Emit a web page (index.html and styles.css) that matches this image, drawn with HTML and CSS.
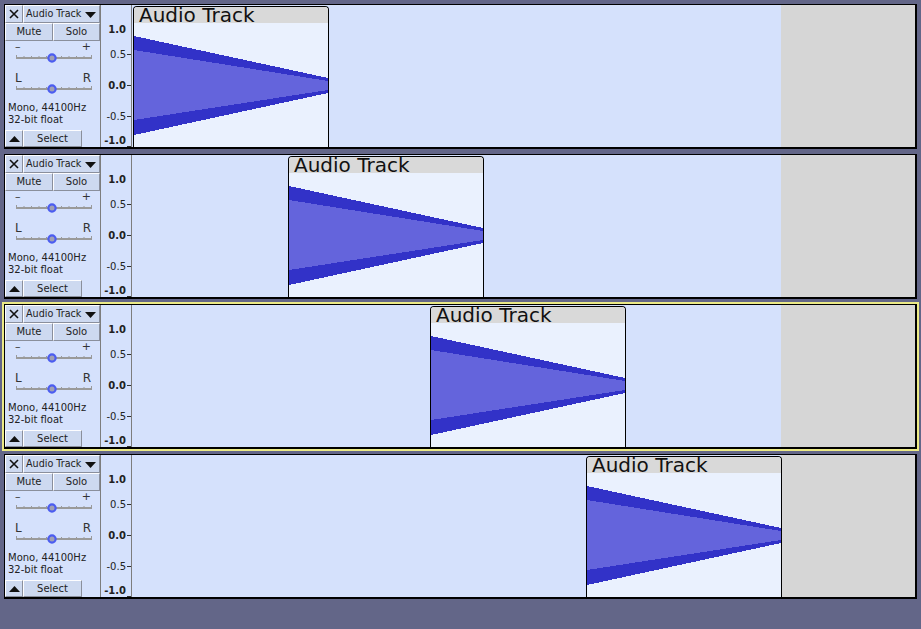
FILE: index.html
```html
<!DOCTYPE html>
<html>
<head>
<meta charset="utf-8">
<link rel="stylesheet" href="styles.css">
</head>
<body>
<div class="tracks">

  <!-- Track 1 -->
  <div class="track">
    <div class="panel">
      <div class="row top-row">
        <div class="btn close-btn"><svg width="10" height="10" viewBox="0 0 10 10"><path d="M1 1 L9 9 M9 1 L1 9" stroke="#111" stroke-width="1.6"/></svg></div>
        <div class="btn title-btn"><span>Audio Track</span><svg width="11" height="6" viewBox="0 0 11 6"><path d="M0 0 H11 L5.5 6 Z" fill="#111"/></svg></div>
      </div>
      <div class="row ms-row">
        <div class="btn mute-btn">Mute</div>
        <div class="btn solo-btn">Solo</div>
      </div>
      <div class="slider gain">
        <div class="slider-labels"><span>–</span><span>+</span></div>
        <svg class="slider-svg" width="78" height="10" viewBox="0 0 78 10"><path d="M1 5 H77" stroke="#9a9a9a" stroke-width="2"/><path d="M1.5 5 V2 M9 5 V3 M16.5 5 V3 M24 5 V3 M31.5 5 V3 M46.5 5 V3 M54 5 V3 M61.5 5 V3 M69 5 V3 M76.5 5 V2" stroke="#9a9a9a" stroke-width="1"/><circle cx="37" cy="5" r="3.6" fill="#a0a0b4" stroke="#4b5cf0" stroke-width="2.2"/></svg>
      </div>
      <div class="slider pan">
        <div class="slider-labels lr"><span>L</span><span>R</span></div>
        <svg class="slider-svg" width="78" height="10" viewBox="0 0 78 10"><path d="M1 5 H77" stroke="#9a9a9a" stroke-width="2"/><path d="M1.5 5 V2 M9 5 V3 M16.5 5 V3 M24 5 V3 M31.5 5 V3 M46.5 5 V3 M54 5 V3 M61.5 5 V3 M69 5 V3 M76.5 5 V2" stroke="#9a9a9a" stroke-width="1"/><circle cx="37" cy="5" r="3.6" fill="#a0a0b4" stroke="#4b5cf0" stroke-width="2.2"/></svg>
      </div>
      <div class="info">Mono, 44100Hz<br>32-bit float</div>
      <div class="row bottom-row">
        <div class="btn collapse-btn"><svg width="11" height="6" viewBox="0 0 11 6"><path d="M0 6 H11 L5.5 0 Z" fill="#111"/></svg></div>
        <div class="btn select-btn">Select</div>
      </div>
    </div>
    <div class="ruler">
      <span class="lbl bold" style="top:19px">1.0</span>
      <span class="lbl" style="top:44px">0.5</span><i class="tick" style="top:49px"></i>
      <span class="lbl bold" style="top:75px">0.0</span><i class="tick" style="top:80px"></i>
      <span class="lbl" style="top:106px">-0.5</span><i class="tick" style="top:111px"></i>
      <span class="lbl bold" style="top:130px">-1.0</span><i class="tick" style="top:141px"></i>
    </div>
    <div class="wave-area">
      <div class="clip" style="margin-left:1px">
        <div class="clip-head">Audio Track</div>
        <div class="clip-body">
          <svg width="194" height="124" viewBox="0 0 194 124" shape-rendering="crispEdges"><polygon points="0,13 194,55 194,70 0,112" fill="#3232c8"/><polygon points="0,27 194,58 194,67 0,97" fill="#6464dc"/></svg>
        </div>
      </div>
    </div>
  </div>

  <!-- Track 2 -->
  <div class="track">
    <div class="panel">
      <div class="row top-row">
        <div class="btn close-btn"><svg width="10" height="10" viewBox="0 0 10 10"><path d="M1 1 L9 9 M9 1 L1 9" stroke="#111" stroke-width="1.6"/></svg></div>
        <div class="btn title-btn"><span>Audio Track</span><svg width="11" height="6" viewBox="0 0 11 6"><path d="M0 0 H11 L5.5 6 Z" fill="#111"/></svg></div>
      </div>
      <div class="row ms-row">
        <div class="btn mute-btn">Mute</div>
        <div class="btn solo-btn">Solo</div>
      </div>
      <div class="slider gain">
        <div class="slider-labels"><span>–</span><span>+</span></div>
        <svg class="slider-svg" width="78" height="10" viewBox="0 0 78 10"><path d="M1 5 H77" stroke="#9a9a9a" stroke-width="2"/><path d="M1.5 5 V2 M9 5 V3 M16.5 5 V3 M24 5 V3 M31.5 5 V3 M46.5 5 V3 M54 5 V3 M61.5 5 V3 M69 5 V3 M76.5 5 V2" stroke="#9a9a9a" stroke-width="1"/><circle cx="37" cy="5" r="3.6" fill="#a0a0b4" stroke="#4b5cf0" stroke-width="2.2"/></svg>
      </div>
      <div class="slider pan">
        <div class="slider-labels lr"><span>L</span><span>R</span></div>
        <svg class="slider-svg" width="78" height="10" viewBox="0 0 78 10"><path d="M1 5 H77" stroke="#9a9a9a" stroke-width="2"/><path d="M1.5 5 V2 M9 5 V3 M16.5 5 V3 M24 5 V3 M31.5 5 V3 M46.5 5 V3 M54 5 V3 M61.5 5 V3 M69 5 V3 M76.5 5 V2" stroke="#9a9a9a" stroke-width="1"/><circle cx="37" cy="5" r="3.6" fill="#a0a0b4" stroke="#4b5cf0" stroke-width="2.2"/></svg>
      </div>
      <div class="info">Mono, 44100Hz<br>32-bit float</div>
      <div class="row bottom-row">
        <div class="btn collapse-btn"><svg width="11" height="6" viewBox="0 0 11 6"><path d="M0 6 H11 L5.5 0 Z" fill="#111"/></svg></div>
        <div class="btn select-btn">Select</div>
      </div>
    </div>
    <div class="ruler">
      <span class="lbl bold" style="top:19px">1.0</span>
      <span class="lbl" style="top:44px">0.5</span><i class="tick" style="top:49px"></i>
      <span class="lbl bold" style="top:75px">0.0</span><i class="tick" style="top:80px"></i>
      <span class="lbl" style="top:106px">-0.5</span><i class="tick" style="top:111px"></i>
      <span class="lbl bold" style="top:130px">-1.0</span><i class="tick" style="top:141px"></i>
    </div>
    <div class="wave-area">
      <div class="clip" style="margin-left:156px">
        <div class="clip-head">Audio Track</div>
        <div class="clip-body">
          <svg width="194" height="124" viewBox="0 0 194 124" shape-rendering="crispEdges"><polygon points="0,13 194,55 194,70 0,112" fill="#3232c8"/><polygon points="0,27 194,58 194,67 0,97" fill="#6464dc"/></svg>
        </div>
      </div>
    </div>
  </div>

  <!-- Track 3 (focused) -->
  <div class="track focused">
    <div class="panel">
      <div class="row top-row">
        <div class="btn close-btn"><svg width="10" height="10" viewBox="0 0 10 10"><path d="M1 1 L9 9 M9 1 L1 9" stroke="#111" stroke-width="1.6"/></svg></div>
        <div class="btn title-btn"><span>Audio Track</span><svg width="11" height="6" viewBox="0 0 11 6"><path d="M0 0 H11 L5.5 6 Z" fill="#111"/></svg></div>
      </div>
      <div class="row ms-row">
        <div class="btn mute-btn">Mute</div>
        <div class="btn solo-btn">Solo</div>
      </div>
      <div class="slider gain">
        <div class="slider-labels"><span>–</span><span>+</span></div>
        <svg class="slider-svg" width="78" height="10" viewBox="0 0 78 10"><path d="M1 5 H77" stroke="#9a9a9a" stroke-width="2"/><path d="M1.5 5 V2 M9 5 V3 M16.5 5 V3 M24 5 V3 M31.5 5 V3 M46.5 5 V3 M54 5 V3 M61.5 5 V3 M69 5 V3 M76.5 5 V2" stroke="#9a9a9a" stroke-width="1"/><circle cx="37" cy="5" r="3.6" fill="#a0a0b4" stroke="#4b5cf0" stroke-width="2.2"/></svg>
      </div>
      <div class="slider pan">
        <div class="slider-labels lr"><span>L</span><span>R</span></div>
        <svg class="slider-svg" width="78" height="10" viewBox="0 0 78 10"><path d="M1 5 H77" stroke="#9a9a9a" stroke-width="2"/><path d="M1.5 5 V2 M9 5 V3 M16.5 5 V3 M24 5 V3 M31.5 5 V3 M46.5 5 V3 M54 5 V3 M61.5 5 V3 M69 5 V3 M76.5 5 V2" stroke="#9a9a9a" stroke-width="1"/><circle cx="37" cy="5" r="3.6" fill="#a0a0b4" stroke="#4b5cf0" stroke-width="2.2"/></svg>
      </div>
      <div class="info">Mono, 44100Hz<br>32-bit float</div>
      <div class="row bottom-row">
        <div class="btn collapse-btn"><svg width="11" height="6" viewBox="0 0 11 6"><path d="M0 6 H11 L5.5 0 Z" fill="#111"/></svg></div>
        <div class="btn select-btn">Select</div>
      </div>
    </div>
    <div class="ruler">
      <span class="lbl bold" style="top:19px">1.0</span>
      <span class="lbl" style="top:44px">0.5</span><i class="tick" style="top:49px"></i>
      <span class="lbl bold" style="top:75px">0.0</span><i class="tick" style="top:80px"></i>
      <span class="lbl" style="top:106px">-0.5</span><i class="tick" style="top:111px"></i>
      <span class="lbl bold" style="top:130px">-1.0</span><i class="tick" style="top:141px"></i>
    </div>
    <div class="wave-area">
      <div class="clip" style="margin-left:298px">
        <div class="clip-head">Audio Track</div>
        <div class="clip-body">
          <svg width="194" height="124" viewBox="0 0 194 124" shape-rendering="crispEdges"><polygon points="0,13 194,55 194,70 0,112" fill="#3232c8"/><polygon points="0,27 194,58 194,67 0,97" fill="#6464dc"/></svg>
        </div>
      </div>
    </div>
  </div>

  <!-- Track 4 -->
  <div class="track">
    <div class="panel">
      <div class="row top-row">
        <div class="btn close-btn"><svg width="10" height="10" viewBox="0 0 10 10"><path d="M1 1 L9 9 M9 1 L1 9" stroke="#111" stroke-width="1.6"/></svg></div>
        <div class="btn title-btn"><span>Audio Track</span><svg width="11" height="6" viewBox="0 0 11 6"><path d="M0 0 H11 L5.5 6 Z" fill="#111"/></svg></div>
      </div>
      <div class="row ms-row">
        <div class="btn mute-btn">Mute</div>
        <div class="btn solo-btn">Solo</div>
      </div>
      <div class="slider gain">
        <div class="slider-labels"><span>–</span><span>+</span></div>
        <svg class="slider-svg" width="78" height="10" viewBox="0 0 78 10"><path d="M1 5 H77" stroke="#9a9a9a" stroke-width="2"/><path d="M1.5 5 V2 M9 5 V3 M16.5 5 V3 M24 5 V3 M31.5 5 V3 M46.5 5 V3 M54 5 V3 M61.5 5 V3 M69 5 V3 M76.5 5 V2" stroke="#9a9a9a" stroke-width="1"/><circle cx="37" cy="5" r="3.6" fill="#a0a0b4" stroke="#4b5cf0" stroke-width="2.2"/></svg>
      </div>
      <div class="slider pan">
        <div class="slider-labels lr"><span>L</span><span>R</span></div>
        <svg class="slider-svg" width="78" height="10" viewBox="0 0 78 10"><path d="M1 5 H77" stroke="#9a9a9a" stroke-width="2"/><path d="M1.5 5 V2 M9 5 V3 M16.5 5 V3 M24 5 V3 M31.5 5 V3 M46.5 5 V3 M54 5 V3 M61.5 5 V3 M69 5 V3 M76.5 5 V2" stroke="#9a9a9a" stroke-width="1"/><circle cx="37" cy="5" r="3.6" fill="#a0a0b4" stroke="#4b5cf0" stroke-width="2.2"/></svg>
      </div>
      <div class="info">Mono, 44100Hz<br>32-bit float</div>
      <div class="row bottom-row">
        <div class="btn collapse-btn"><svg width="11" height="6" viewBox="0 0 11 6"><path d="M0 6 H11 L5.5 0 Z" fill="#111"/></svg></div>
        <div class="btn select-btn">Select</div>
      </div>
    </div>
    <div class="ruler">
      <span class="lbl bold" style="top:19px">1.0</span>
      <span class="lbl" style="top:44px">0.5</span><i class="tick" style="top:49px"></i>
      <span class="lbl bold" style="top:75px">0.0</span><i class="tick" style="top:80px"></i>
      <span class="lbl" style="top:106px">-0.5</span><i class="tick" style="top:111px"></i>
      <span class="lbl bold" style="top:130px">-1.0</span><i class="tick" style="top:141px"></i>
    </div>
    <div class="wave-area">
      <div class="clip" style="margin-left:454px">
        <div class="clip-head">Audio Track</div>
        <div class="clip-body">
          <svg width="194" height="124" viewBox="0 0 194 124" shape-rendering="crispEdges"><polygon points="0,13 194,55 194,70 0,112" fill="#3232c8"/><polygon points="0,27 194,58 194,67 0,97" fill="#6464dc"/></svg>
        </div>
      </div>
    </div>
  </div>

</div>
</body>
</html>
```

FILE: styles.css
```css
html, body {
  margin: 0;
  padding: 0;
  background: #636688;
  font-family: "DejaVu Sans", "Liberation Sans", sans-serif;
  color: #222;
}

.tracks {
  padding: 4px 0 0 4px;
  display: flex;
  flex-direction: column;
  gap: 5px;
}

.track {
  box-sizing: border-box;
  width: 913px;
  height: 145px;
  border-top: 1px solid #000;
  border-left: 1px solid #000;
  border-right: 2px solid #000;
  border-bottom: 2px solid #000;
  display: flex;
  background: #d5e1fc;
}

.track.focused {
  outline: 2px solid #ecea86;
  outline-offset: 0;
}

/* ---------- control panel ---------- */
.panel {
  width: 95px;
  border-right: 1px solid #7d7d7d;
  display: flex;
  flex-direction: column;
  background: #d5e1fc;
  font-size: 10px;
}

.row {
  display: flex;
}

.btn {
  box-sizing: border-box;
  background: #cdd9f0;
  border-top: 1px solid #fdfdff;
  border-left: 1px solid #fdfdff;
  border-right: 1px solid #8a8f9c;
  border-bottom: 1px solid #8a8f9c;
  display: flex;
  align-items: center;
  justify-content: center;
  height: 18px;
  color: #222;
  font-size: 10px;
  line-height: 1;
}

.close-btn { width: 18px; }
.title-btn {
  width: 77px;
  justify-content: space-between;
  padding: 0 3px 0 2px;
  font-size: 9.6px;
}
.title-btn svg { margin-top: 1px; flex: none; }

.mute-btn { width: 48px; }
.solo-btn { width: 47px; }

.slider {
  display: flex;
  flex-direction: column;
}

.slider-labels {
  display: flex;
  justify-content: space-between;
  padding: 0 9px 0 10px;
  height: 12px;
  font-size: 11px;
  line-height: 12px;
  color: #333;
}
.gain { height: 22px; }
.pan { margin-top: 9px; height: 22px; }
.slider-labels.lr {
  font-size: 12px;
  line-height: 13px;
}
.slider-svg {
  display: block;
  margin-left: 10px;
  flex: none;
}

.info {
  margin-top: 8px;
  padding-left: 3px;
  font-size: 10px;
  line-height: 12px;
  color: #222;
  height: 24px;
}

.bottom-row {
  margin-top: auto;
}
.collapse-btn { width: 18px; height: 17px; }
.select-btn { width: 59px; height: 17px; }

/* ---------- ruler ---------- */
.ruler {
  position: relative;
  width: 30px;
  border-right: 1px solid #7d7d7d;
  background: #d5e1fc;
  font-size: 10px;
  color: #222;
}
.lbl {
  position: absolute;
  right: 5px;
  line-height: 12px;
}
.lbl.bold { font-weight: bold; }
.tick {
  position: absolute;
  right: 0;
  width: 4px;
  height: 1px;
  background: #333;
}

/* ---------- wave area ---------- */
.wave-area {
  flex: 1;
  display: flex;
  align-items: flex-end;
  background: linear-gradient(to right, #d5e1fc 649px, #d6d6d6 649px);
}

.clip {
  box-sizing: border-box;
  width: 196px;
  height: 141px;
  border: 1px solid #000;
  border-bottom: none;
  border-radius: 4px 4px 0 0;
  display: flex;
  flex-direction: column;
  background: #eaf1fe;
}

.clip-head {
  height: 16px;
  background: #d9d9d9;
  border-radius: 3px 3px 0 0;
  font-size: 20px;
  line-height: 16px;
  padding-left: 5px;
  color: #111;
  white-space: nowrap;
}

.clip-body {
  flex: 1;
  background: #eaf1fe;
}
.clip-body svg { display: block; }
```
